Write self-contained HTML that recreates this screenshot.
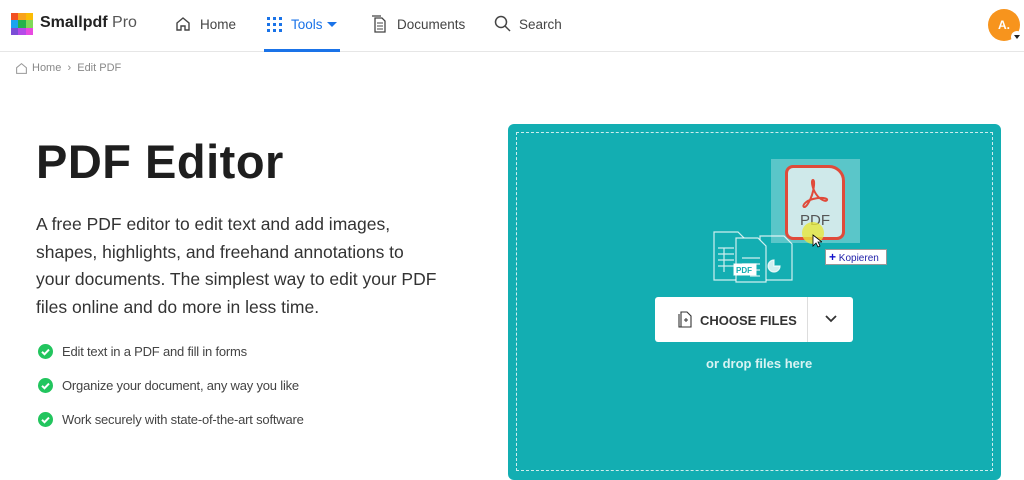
<!DOCTYPE html>
<html><head><style>
*{margin:0;padding:0;box-sizing:border-box}
body{width:1024px;height:480px;overflow:hidden;background:#fff;font-family:"Liberation Sans",sans-serif;position:relative;color:#222}
.abs{position:absolute}
.nav{height:52px;border-bottom:1px solid #e6e6e6}
.navt{font-size:13.5px;color:#444;top:17px}
.li{font-size:13px;color:#444;left:62px;letter-spacing:-0.2px}
.chk{left:38px}
</style></head><body>
<div class="abs nav" style="left:0;top:0;width:1024px"></div>
<div class="abs" style="left:11px;top:13px;width:22px;height:22px;display:grid;grid-template-columns:repeat(3,1fr)">
<i style="background:#f25022"></i><i style="background:#f9a31b"></i><i style="background:#fbbc05"></i>
<i style="background:#1aa4f0"></i><i style="background:#22b24c"></i><i style="background:#7ed957"></i>
<i style="background:#7b4dd6"></i><i style="background:#b44ae8"></i><i style="background:#e84ae0"></i></div>
<div class="abs" style="left:40px;top:14px;font-size:16px;font-weight:bold;color:#222">Smallpdf <span style="font-weight:normal;color:#555">Pro</span></div>
<svg class="abs" style="left:175px;top:16px" width="16" height="16" viewBox="0 0 16 16"><path d="M2 7L8 2l6 5v7h-4v-4H6v4H2z" fill="none" stroke="#444" stroke-width="1.4"/></svg>
<div class="abs navt" style="left:200px">Home</div>
<div class="abs" style="left:267px;top:17px;width:15px;height:15px;display:grid;grid-template-columns:repeat(3,3px);gap:3px">
<i style="background:#1a73e8"></i><i style="background:#1a73e8"></i><i style="background:#1a73e8"></i><i style="background:#1a73e8"></i><i style="background:#1a73e8"></i><i style="background:#1a73e8"></i><i style="background:#1a73e8"></i><i style="background:#1a73e8"></i><i style="background:#1a73e8"></i></div>
<div class="abs navt" style="left:291px;color:#1a73e8">Tools</div>
<div class="abs" style="left:327px;top:22px;border:5px solid transparent;border-top:5px solid #1a73e8"></div>
<div class="abs" style="left:264px;top:49px;width:76px;height:3px;background:#1a73e8"></div>
<svg class="abs" style="left:371px;top:15px" width="17" height="18" viewBox="0 0 17 18"><path d="M4 3h7l3 3v11H4z M1 1h9" fill="none" stroke="#444" stroke-width="1.3"/><path d="M6 8h6M6 11h6M6 14h6" stroke="#444"/></svg>
<div class="abs navt" style="left:397px">Documents</div>
<svg class="abs" style="left:494px;top:15px" width="18" height="18" viewBox="0 0 18 18"><circle cx="7" cy="7" r="5.5" fill="none" stroke="#444" stroke-width="1.5"/><path d="M11 11l5 5" stroke="#444" stroke-width="1.5"/></svg>
<div class="abs navt" style="left:519px">Search</div>
<div class="abs" style="left:988px;top:9px;width:32px;height:32px;border-radius:50%;background:#f7941d;color:#fff;font-weight:bold;font-size:12px;text-align:center;line-height:32px">A.</div>
<div class="abs" style="left:1011px;top:31px;width:12px;height:12px;border-radius:50%;background:#fff"></div>
<div class="abs" style="left:1014px;top:35px;border:3px solid transparent;border-top:4px solid #222"></div>
<svg class="abs" style="left:15px;top:62px" width="13" height="13" viewBox="0 0 16 16"><path d="M2 7L8 2l6 5v7H2z" fill="none" stroke="#999" stroke-width="1.3"/></svg>
<div class="abs" style="left:32px;top:62px;font-size:11px;color:#888">Home &nbsp;›&nbsp; Edit PDF</div>
<div class="abs" style="left:36px;top:134px;font-size:47px;font-weight:bold;color:#1e1e1e;letter-spacing:0.5px">PDF Editor</div>
<div class="abs" style="left:36px;top:211px;font-size:17.5px;line-height:27.5px;color:#333">A free PDF editor to edit text and add images,<br>shapes, highlights, and freehand annotations to<br>your documents. The simplest way to edit your PDF<br>files online and do more in less time.</div>
<svg class="abs chk" style="top:344px" width="15" height="15" viewBox="0 0 15 15"><circle cx="7.5" cy="7.5" r="7.5" fill="#22c55e"/><path d="M4 7.8l2.5 2.4 4.5-4.6" fill="none" stroke="#fff" stroke-width="2"/></svg><div class="abs li" style="top:344px">Edit text in a PDF and fill in forms</div>
<svg class="abs chk" style="top:378px" width="15" height="15" viewBox="0 0 15 15"><circle cx="7.5" cy="7.5" r="7.5" fill="#22c55e"/><path d="M4 7.8l2.5 2.4 4.5-4.6" fill="none" stroke="#fff" stroke-width="2"/></svg><div class="abs li" style="top:378px">Organize your document, any way you like</div>
<svg class="abs chk" style="top:412px" width="15" height="15" viewBox="0 0 15 15"><circle cx="7.5" cy="7.5" r="7.5" fill="#22c55e"/><path d="M4 7.8l2.5 2.4 4.5-4.6" fill="none" stroke="#fff" stroke-width="2"/></svg><div class="abs li" style="top:412px">Work securely with state-of-the-art software</div>
<div class="abs" style="left:508px;top:124px;width:493px;height:356px;background:#13aeb2;border-radius:6px"></div>
<div class="abs" style="left:516px;top:132px;width:477px;height:339px;border:1px dashed rgba(255,255,255,.8)"></div>
<svg class="abs" style="left:710px;top:228px" width="90" height="55" viewBox="0 0 90 55" fill="none" stroke="rgba(255,255,255,.8)" stroke-width="1.2"><path d="M4 4h24l6 6v42H4z"/><path d="M8 20h16M8 26h16M8 32h16M8 38h16M14 20v24"/><path d="M50 8h24l8 8v36H50z"/><path d="M64 32a6 6 0 1 0 6 6h-6z" fill="rgba(255,255,255,.8)"/><path d="M26 10h22l8 8v36H26z" fill="#13aeb2"/><path d="M32 30h18M32 36h18M40 42h10M40 48h10"/><rect x="24" y="36" width="22" height="11" fill="#fff"/><text x="26" y="45" font-size="8" fill="#13aeb2" stroke="none" font-weight="bold" font-family="Liberation Sans">PDF</text></svg>
<div class="abs" style="left:771px;top:159px;width:89px;height:84px;background:rgba(255,255,255,.3)"></div>
<div class="abs" style="left:785px;top:165px;width:60px;height:75px;background:#cfe9ea;border:3px solid #e04a3a;border-radius:8px 16px 8px 8px"></div>
<svg class="abs" style="left:798px;top:178px" width="34" height="30" viewBox="0 0 34 30"><path d="M15 2c-2 0-1 8 3 14s10 8 11 6-6-3-14-1-11 7-9 8 6-6 8-12 3-15 1-15z" fill="none" stroke="#e04a3a" stroke-width="2"/></svg>
<div class="abs" style="left:800px;top:212px;font-size:15px;color:#555">PDF</div>
<div class="abs" style="left:802px;top:222px;width:22px;height:22px;border-radius:50%;background:rgba(230,230,60,.8)"></div>
<svg class="abs" style="left:812px;top:234px" width="10" height="14" viewBox="0 0 10 14"><path d="M1 1v11l3-3 2 4 2-1-2-4h4z" fill="#fff" stroke="#000" stroke-width=".8"/></svg>
<div class="abs" style="left:825px;top:249px;width:62px;height:16px;background:#fff;border:1px solid #999;font-size:10px;color:#22a;line-height:14px;padding-left:3px"><b style="color:#11c;font-size:12px">+</b> Kopieren</div>
<div class="abs" style="left:655px;top:297px;width:198px;height:45px;background:#fff;border-radius:3px"></div>
<div class="abs" style="left:807px;top:297px;width:1px;height:45px;background:#ddd"></div>
<svg class="abs" style="left:678px;top:311px" width="14" height="17" viewBox="0 0 14 17"><path d="M3 1h6l4 4v11H3z M1 3v13h10" fill="none" stroke="#333" stroke-width="1.1"/><path d="M6 9h4M8 7v4" stroke="#333"/></svg>
<div class="abs" style="left:700px;top:313px;font-size:13px;font-weight:bold;color:#333">CHOOSE FILES</div>
<svg class="abs" style="left:824px;top:314px" width="14" height="10" viewBox="0 0 14 10"><path d="M2 2l5 5 5-5" fill="none" stroke="#333" stroke-width="1.8"/></svg>
<div class="abs" style="left:706px;top:356px;font-size:13px;font-weight:bold;color:#d8f3f3">or drop files here</div>
</body></html>
